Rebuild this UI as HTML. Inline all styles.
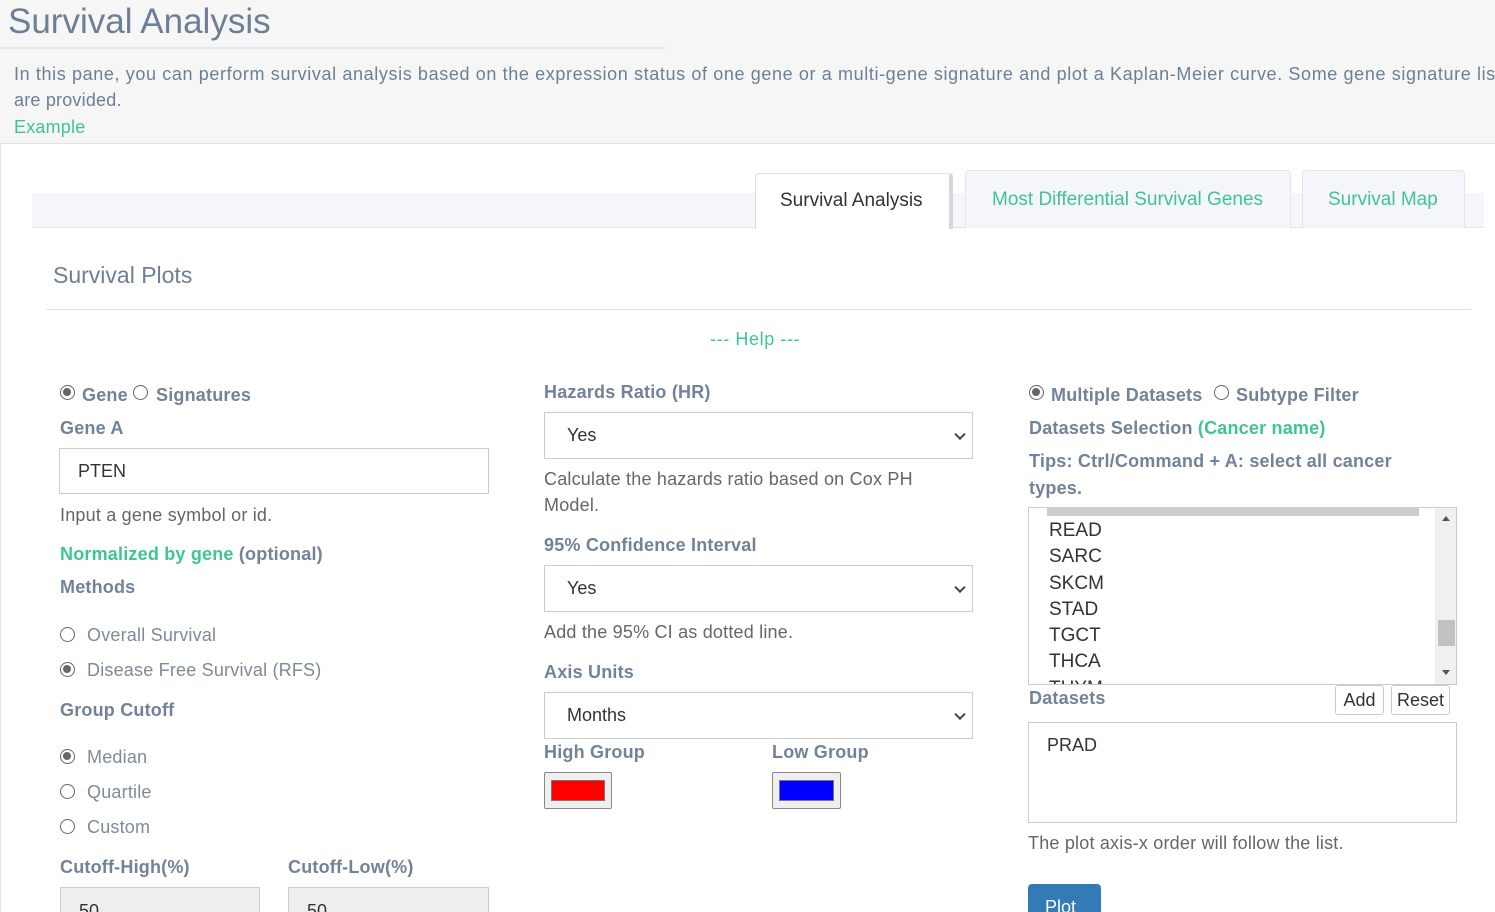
<!DOCTYPE html>
<html><head><meta charset="utf-8"><style>
*{margin:0;padding:0;box-sizing:border-box}
html,body{width:1495px;height:912px;overflow:hidden}
body{background:#f6f6f6;font-family:"Liberation Sans",sans-serif;position:relative;color:#666}
.a{position:absolute;white-space:nowrap}
.lab{font-weight:bold;color:#72829a;font-size:18px;letter-spacing:0.2px}
.t{font-size:18px;color:#666;letter-spacing:0.2px}
.g{color:#3fc494}
.inp{position:absolute;background:#fff;border:1px solid #ccc;font-size:18px;color:#333;padding-left:18px;display:flex;align-items:center}
.rad{position:absolute;width:15px;height:15px;border:1.5px solid #666;border-radius:50%;background:#fff}
.rad.on::after{content:"";position:absolute;left:2px;top:2px;width:8px;height:8px;border-radius:50%;background:#666}
.chev{position:absolute;right:8px;top:50%;width:8px;height:8px;border-right:2px solid #444;border-bottom:2px solid #444;transform:translateY(-70%) rotate(45deg)}
.rt{font-size:18px;color:#7f8a99;letter-spacing:0.2px}
</style></head><body>
<div class="a" style="left:8px;top:2px;font-size:35px;color:#6d7f96">Survival Analysis</div>
<div class="a" style="left:0;top:47px;width:666px;height:2px;background:#e6e9ee"></div>
<div class="a t" style="left:14px;top:64px;color:#6d7f96;width:1481px;overflow:hidden;letter-spacing:0.62px">In this pane, you can perform survival analysis based on the expression status of one gene or a multi-gene signature and plot a Kaplan-Meier curve. Some gene signature list</div>
<div class="a t" style="left:14px;top:90px;color:#6d7f96">are provided.</div>
<div class="a t" style="left:14px;top:117px;color:#3fc494">Example</div>
<div class="a" style="left:0;top:143px;width:1495px;height:769px;background:#fff;border-top:1px solid #e3e3e3;border-left:1px solid #e3e3e3"></div>
<div class="a" style="left:32px;top:193px;width:1452px;height:35px;background:#f5f6f9;border-bottom:1px solid #e3e5ea"></div>
<div class="a" style="left:755px;top:173px;width:198px;height:56px;background:#fff;border:1px solid #ddd;border-right:4px solid #d5d7da;border-bottom:none;border-radius:4px 4px 0 0"></div>
<div class="a" style="left:780px;top:190px;font-size:19px;color:#333">Survival Analysis</div>
<div class="a" style="left:965px;top:170px;width:326px;height:58px;background:#f5f6f9;border:1px solid #e3e5ea;border-bottom:none;border-radius:4px 4px 0 0"></div>
<div class="a g" style="left:992px;top:189px;font-size:19px">Most Differential Survival Genes</div>
<div class="a" style="left:1302px;top:170px;width:163px;height:58px;background:#f5f6f9;border:1px solid #e3e5ea;border-bottom:none;border-radius:4px 4px 0 0"></div>
<div class="a g" style="left:1328px;top:189px;font-size:19px">Survival Map</div>
<div class="a" style="left:53px;top:262px;font-size:23px;color:#6d7f96">Survival Plots</div>
<div class="a" style="left:46px;top:309px;width:1425px;height:1px;background:#ddd"></div>
<div class="a g" style="left:710px;top:329px;font-size:18px;letter-spacing:0.6px">--- Help ---</div>

<div class="rad on" style="left:60px;top:385px"></div>
<div class="a lab" style="left:82px;top:385px">Gene</div>
<div class="rad" style="left:133px;top:385px"></div>
<div class="a lab" style="left:156px;top:385px">Signatures</div>
<div class="a lab" style="left:60px;top:418px">Gene A</div>
<div class="inp" style="left:59px;top:448px;width:430px;height:46px">PTEN</div>
<div class="a t" style="left:60px;top:505px">Input a gene symbol or id.</div>
<div class="a lab" style="left:60px;top:544px"><span class="g">Normalized by gene</span> (optional)</div>
<div class="a lab" style="left:60px;top:577px">Methods</div>
<div class="rad" style="left:60px;top:627px"></div><div class="a rt" style="left:87px;top:625px">Overall Survival</div>
<div class="rad on" style="left:60px;top:662px"></div><div class="a rt" style="left:87px;top:660px">Disease Free Survival (RFS)</div>
<div class="a lab" style="left:60px;top:700px">Group Cutoff</div>
<div class="rad on" style="left:60px;top:749px"></div><div class="a rt" style="left:87px;top:747px">Median</div>
<div class="rad" style="left:60px;top:784px"></div><div class="a rt" style="left:87px;top:782px">Quartile</div>
<div class="rad" style="left:60px;top:819px"></div><div class="a rt" style="left:87px;top:817px">Custom</div>
<div class="a lab" style="left:60px;top:857px">Cutoff-High(%)</div>
<div class="a lab" style="left:288px;top:857px">Cutoff-Low(%)</div>
<div class="inp" style="left:60px;top:887px;width:200px;height:40px;background:#eee;align-items:flex-start;padding-top:13px">50</div>
<div class="inp" style="left:288px;top:887px;width:201px;height:40px;background:#eee;align-items:flex-start;padding-top:13px">50</div>

<div class="a lab" style="left:544px;top:382px">Hazards Ratio (HR)</div>
<div class="inp" style="left:544px;top:412px;width:429px;height:47px;padding-left:22px">Yes<span class="chev"></span></div>
<div class="a t" style="left:544px;top:469px">Calculate the hazards ratio based on Cox PH</div>
<div class="a t" style="left:544px;top:495px">Model.</div>
<div class="a lab" style="left:544px;top:535px">95% Confidence Interval</div>
<div class="inp" style="left:544px;top:565px;width:429px;height:47px;padding-left:22px">Yes<span class="chev"></span></div>
<div class="a t" style="left:544px;top:622px">Add the 95% CI as dotted line.</div>
<div class="a lab" style="left:544px;top:662px">Axis Units</div>
<div class="inp" style="left:544px;top:692px;width:429px;height:47px;padding-left:22px">Months<span class="chev"></span></div>
<div class="a lab" style="left:544px;top:742px">High Group</div>
<div class="a lab" style="left:772px;top:742px">Low Group</div>
<div class="a" style="left:544px;top:772px;width:68px;height:37px;background:#efefef;border:1px solid #888;border-radius:2px"><div style="margin:7px 6px;height:21px;background:#f00;border:1px solid #777"></div></div>
<div class="a" style="left:772px;top:772px;width:69px;height:37px;background:#efefef;border:1px solid #888;border-radius:2px"><div style="margin:7px 6px;height:21px;background:#00f;border:1px solid #777"></div></div>

<div class="rad on" style="left:1029px;top:385px"></div>
<div class="a lab" style="left:1051px;top:385px">Multiple Datasets</div>
<div class="rad" style="left:1214px;top:385px"></div>
<div class="a lab" style="left:1236px;top:385px">Subtype Filter</div>
<div class="a lab" style="left:1029px;top:418px">Datasets Selection <span class="g">(Cancer name)</span></div>
<div class="a lab" style="left:1029px;top:451px">Tips: Ctrl/Command + A: select all cancer</div>
<div class="a lab" style="left:1029px;top:478px">types.</div>
<div class="a" style="left:1028px;top:507px;width:429px;height:178px;border:1px solid #ccc;background:#fff;overflow:hidden">
<div style="position:absolute;left:18px;top:0;width:372px;height:8px;background:#ccc"></div>
<div style="position:absolute;left:406px;top:0;width:22px;height:178px;background:#f0f0f0"></div>
<div style="position:absolute;left:409px;top:112px;width:17px;height:26px;background:#c1c1c1"></div>
<div style="position:absolute;left:413px;top:8px;border:4px solid transparent;border-bottom:5px solid #555;border-top:none"></div>
<div style="position:absolute;left:413px;top:162px;border:4px solid transparent;border-top:5px solid #555;border-bottom:none"></div>
<div style="position:absolute;left:20px;top:10px;font-size:19px;color:#333;line-height:26.3px">READ<br>SARC<br>SKCM<br>STAD<br>TGCT<br>THCA<br>THYM</div>
</div>
<div class="a lab" style="left:1029px;top:688px">Datasets</div>
<div class="a" style="left:1335px;top:685px;width:49px;height:30px;border:1px solid #ccc;border-radius:3px;font-size:18px;color:#333;text-align:center;line-height:28px;background:#fff">Add</div>
<div class="a" style="left:1391px;top:685px;width:59px;height:30px;border:1px solid #ccc;border-radius:3px;font-size:18px;color:#333;text-align:center;line-height:28px;background:#fff">Reset</div>
<div class="inp" style="left:1028px;top:722px;width:429px;height:101px;align-items:flex-start;padding-top:12px">PRAD</div>
<div class="a t" style="left:1028px;top:833px">The plot axis-x order will follow the list.</div>
<div class="a" style="left:1028px;top:884px;width:73px;height:40px;background:#337ab7;border-radius:4px;color:#fff;font-size:18px;padding:13px 0 0 17px">Plot</div>
</body></html>
